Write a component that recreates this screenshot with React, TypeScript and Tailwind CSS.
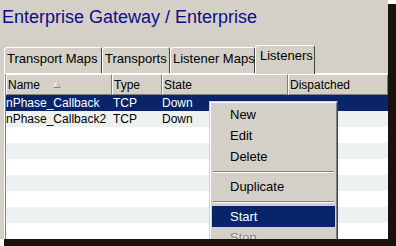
const rows = [
  { name: 'nPhase_Callback', type: 'TCP', state: 'Down' },
  { name: 'nPhase_Callback2', type: 'TCP', state: 'Down' },
  null,
  null,
  null,
  null,
  null,
  null,
  null,
]

const tabs = [
  { label: 'Transport Maps', w: 'w-[98px]' },
  { label: 'Transports', w: 'w-[68px]' },
  { label: 'Listener Maps', w: 'w-[85px]' },
]

function HeaderCell({ label, className, children }: { label: string; className: string; children?: React.ReactNode }) {
  return (
    <div
      className={`flex h-[21px] items-center border-t border-l border-b border-r border-t-white border-l-white border-b-[#808080] border-r-[#808080] pl-[1px] ${className}`}
    >
      <span>{label}</span>
      {children}
    </div>
  )
}

function MenuItem({ label, active, disabled }: { label: string; active?: boolean; disabled?: boolean }) {
  return (
    <div
      className={`h-[21px] pl-[18px] leading-[21px] ${
        active ? 'bg-[#0a246a] text-white' : disabled ? 'text-[#808080] [text-shadow:1px_1px_0_#ffffff]' : 'text-black'
      }`}
    >
      {label}
    </div>
  )
}

function Separator() {
  return (
    <div className="px-[1px] pt-[4px] pb-[3px]">
      <div className="h-[1px] bg-[#808080]" />
      <div className="h-[1px] bg-white" />
    </div>
  )
}

export default function App() {
  return (
    <div className="h-[246px] w-[396px] bg-white font-['Liberation_Sans',Arial,sans-serif]">
      <div className="relative flex h-[239px] w-[388px] flex-col overflow-hidden bg-[#d4d0c8] shadow-[6px_6px_0_2px_#1b120b]">
        <div className="h-[28px] pt-[6px] pl-[2px] text-[18px] leading-[22px] text-[#0c0c88]">
          Enterprise Gateway / Enterprise
        </div>

        <div className="mt-[17px] flex h-[28px] items-end pl-[4px] text-[13px] text-black">
          {tabs.map((t) => (
            <div
              key={t.label}
              className={`${t.w} h-[26px] rounded-t-[3px] border-t border-l border-r border-t-white border-l-white border-r-[#404040] pt-[3px] pl-[2px] leading-[16px] whitespace-nowrap`}
            >
              {t.label}
            </div>
          ))}
          <div className="relative z-10 -mb-[1px] h-[29px] w-[60px] rounded-t-[3px] border-t border-l border-r border-t-white border-l-white border-r-[#404040] bg-[#d4d0c8] pt-[2px] pl-[4px] leading-[16px]">
            Listeners
          </div>
        </div>

        <div className="ml-[4px] flex flex-1 flex-col border-t border-l border-white">
          <div className="flex flex-1 flex-col overflow-hidden border-l border-[#808080] text-[12px] text-black">
            <div className="flex">
              <HeaderCell label="Name" className="w-[106px]">
                <svg width="8" height="7" viewBox="0 0 8 7" className="ml-[13px] mt-[-1px]">
                  <path d="M0.5 6.5 L4 0.5 L7.5 6.5" fill="none" stroke="#ffffff" strokeWidth="1" />
                  <path d="M0.5 6.5 H7.5" fill="none" stroke="#808080" strokeWidth="1" />
                  <path d="M4 0.5 L7.5 6.5" fill="none" stroke="#a0a0a0" strokeWidth="1" />
                </svg>
              </HeaderCell>
              <HeaderCell label="Type" className="w-[50px]" />
              <HeaderCell label="State" className="w-[126px]" />
              <HeaderCell label="Dispatched" className="flex-1" />
            </div>

            {rows.map((r, i) => (
              <div
                key={i}
                className={`flex h-[16px] shrink-0 leading-[16px] ${
                  i === 0 ? 'bg-[#0a246a] text-white' : i % 2 === 1 ? 'bg-[#edf1f0]' : 'bg-white'
                }`}
              >
                <div className="w-[106px] whitespace-nowrap">{r?.name}</div>
                <div className="w-[50px] pl-[1px]">{r?.type}</div>
                <div className="w-[126px]">{r?.state}</div>
                <div className="flex-1" />
              </div>
            ))}
          </div>
        </div>

        <div className="absolute top-[101px] left-[209px] w-[129px] border border-t-[#d4d0c8] border-l-[#d4d0c8] border-b-[#404040] border-r-[#404040] bg-[#d4d0c8] text-[13px]">
          <div className="border border-t-white border-l-white border-b-[#808080] border-r-[#808080] p-[1px]">
            <MenuItem label="New" />
            <MenuItem label="Edit" />
            <MenuItem label="Delete" />
            <Separator />
            <MenuItem label="Duplicate" />
            <Separator />
            <MenuItem label="Start" active />
            <MenuItem label="Stop" disabled />
          </div>
        </div>
      </div>
    </div>
  )
}
